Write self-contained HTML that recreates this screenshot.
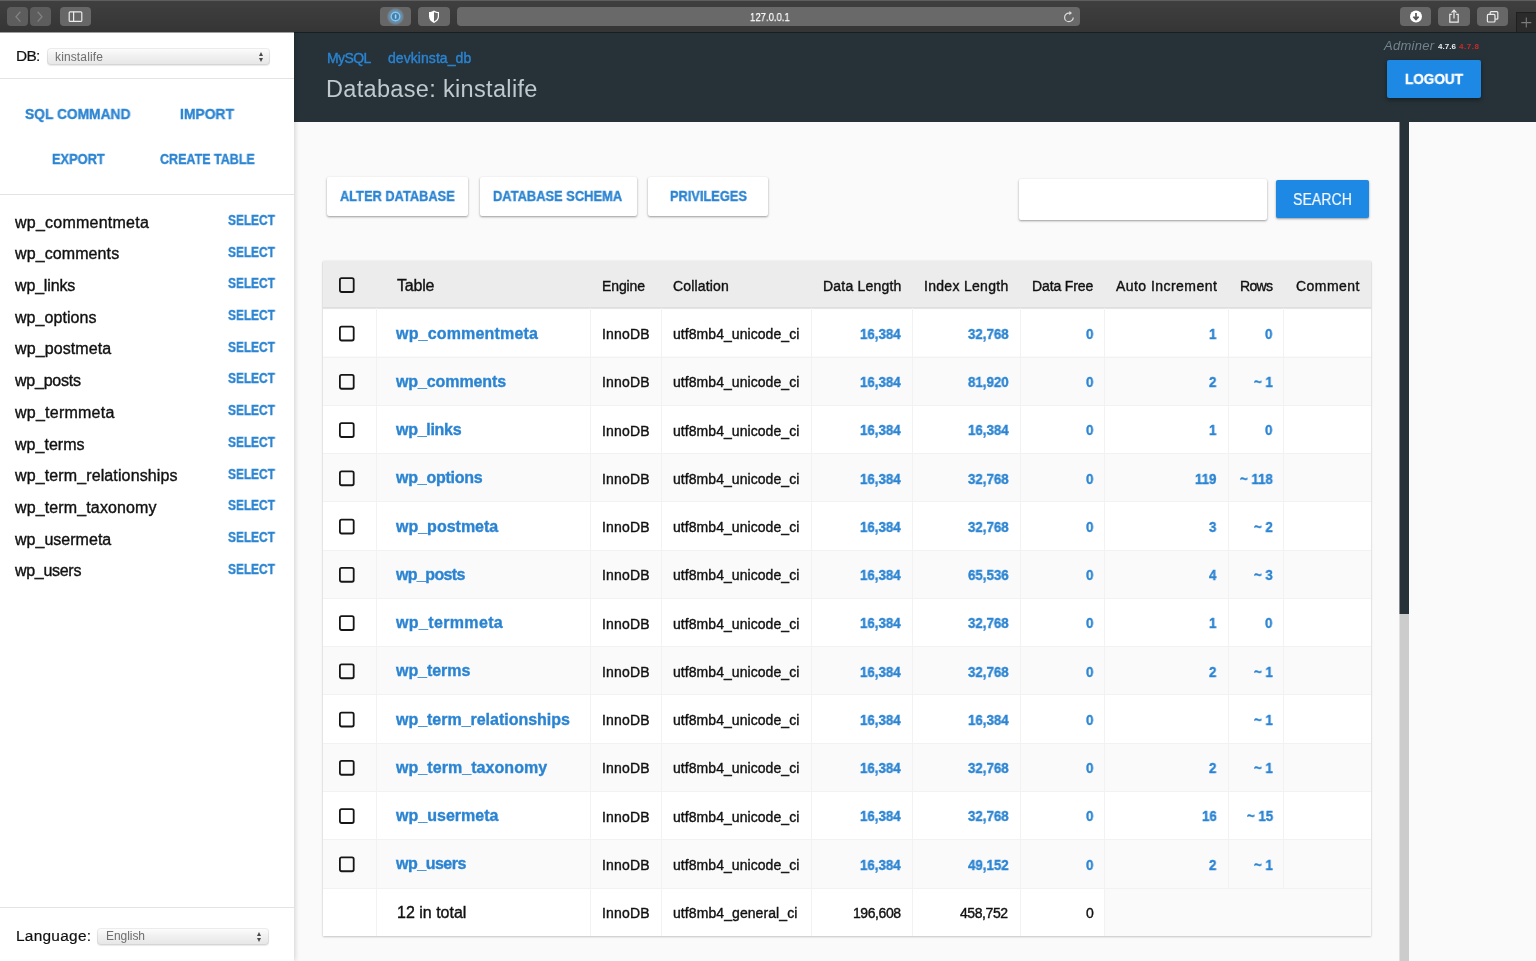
<!DOCTYPE html>
<html lang="en"><head><meta charset="utf-8"><title>Adminer - kinstalife</title>
<style>
*{box-sizing:border-box;margin:0;padding:0}
html,body{width:1536px;height:961px;overflow:hidden;background:#fafafa;font-family:"Liberation Sans",Arial,sans-serif;color:#111}
a{text-decoration:none;color:#2b84d2;cursor:pointer}
.t{position:absolute;white-space:nowrap;display:block;will-change:transform;transform-origin:0 50%}
#chrome{position:absolute;left:0;top:0;width:1536px;height:32px;background:linear-gradient(#626262 0,#5a5a5a 1px,#3f3f3f 1.5px,#353535 32px);z-index:10}
.tb{position:absolute;top:7px;height:19px;background:#676767;border-radius:4px}
.tb svg{display:block}
.url{position:absolute;top:7px;height:19px;background:#696969;border-radius:4px}
.ut{color:#fff;-webkit-text-stroke:.25px #fff}
.rl{position:absolute;left:1062px;top:9.5px}
.nt{position:absolute;left:1515.5px;top:11.5px;width:20px;height:20px;background:#2b2b2b;border-left:1px solid #1f1f1f;border-top:1px solid #1f1f1f}
#side{position:absolute;left:0;top:0;width:294px;height:961px;background:#fff;box-shadow:1px 0 5px rgba(0,0,0,.17);z-index:5}
.sel{position:absolute;height:17px;border-radius:4px;background:linear-gradient(#fefefe,#f1f1f1 45%,#e6e6e6);box-shadow:inset 0 0 0 1px rgba(0,0,0,.07),0 1px 1px rgba(0,0,0,.09)}
.opt{color:#6e6e6e}
.arr{position:absolute;right:6.3px;top:3.5px;width:5.4px;height:10px}
.arr:before,.arr:after{content:"";position:absolute;left:0;border-left:2.7px solid transparent;border-right:2.7px solid transparent}
.arr:before{top:0;border-bottom:4px solid #4a4a4a}
.arr:after{bottom:0;border-top:4px solid #4a4a4a}
.hr{position:absolute;left:0;width:294px;height:1px;background:#e3e3e3}
#head{position:absolute;left:294px;top:32px;width:1242px;height:90px;background:#263238}
#main{position:absolute;left:0;top:0;width:1536px;height:961px}
h2{color:#bfc9ce}
.adm{color:#74838b}
.v1{color:#e8ecee}.v2{color:#cc2a2a}
.logout{position:absolute;left:1387px;top:60px;width:94px;height:38px;background:#1e88e5;border-radius:2px;box-shadow:0 2px 4px rgba(0,0,0,.4)}
.lo,.sr{color:#fff}
.btn{position:absolute;top:176.5px;height:39px;background:#fff;border-radius:2px;box-shadow:0 1px 3px rgba(0,0,0,.16),0 1px 2px rgba(0,0,0,.26)}
.inp{position:absolute;left:1019px;top:178.8px;width:248.2px;height:40.8px;background:#fff;border-radius:2px;box-shadow:0 1px 3px rgba(0,0,0,.16),0 1px 2px rgba(0,0,0,.26)}
.search{position:absolute;left:1275.5px;top:179.8px;width:93.6px;height:38.4px;background:#1e88e5;border-radius:2px;box-shadow:0 1px 3px rgba(0,0,0,.16),0 1px 2px rgba(0,0,0,.26)}
#tbl{position:absolute;background:#fafafa;box-shadow:0 1px 2px rgba(0,0,0,.2),0 0 2px rgba(0,0,0,.08)}
.r{position:absolute;left:0;width:100%;border-top:1px solid #f2f2f2}
.thr{background:#ececec;border-top:0;border-bottom:1px solid #dedede;box-shadow:0 1px 1px rgba(0,0,0,.05)}
.odd{background:#fff}.even{background:#fafafa}
.vl{position:absolute;width:1px;background:#f2f2f2}
.cbs{position:absolute;left:15.6px;top:0}.cbs rect{fill:none;stroke:#161616;stroke-width:1.8}
.sb1{position:absolute;left:1400px;top:122px;width:9px;height:492px;background:#263238;box-shadow:-1px 0 0 rgba(38,50,56,.55)}
.sb2{position:absolute;left:1400px;top:614px;width:9px;height:347px;background:#ccc;box-shadow:-1px 0 0 rgba(204,204,204,.55)}
.nav,.se,.bt,.nm,.nu,.lo{-webkit-text-stroke:.35px currentColor}
.th,.tht,.td,.tdt,.tn,.bc{-webkit-text-stroke:.38px currentColor}
.lbl{-webkit-text-stroke:.2px currentColor}
.sr{-webkit-text-stroke:.12px currentColor}
#cl{position:absolute;left:0;top:32px;width:1536px;height:1px;background:rgba(0,0,0,.38);z-index:11}
.tb.dim{background:#5d5d5d}
.lbl{font-size:15.4px;font-weight:400;font-style:normal;line-height:20px}
.opt{font-size:12px;font-weight:400;font-style:normal;line-height:16px}
.nav{font-size:14px;font-weight:700;font-style:normal;line-height:18px}
.tn{font-size:16px;font-weight:400;font-style:normal;line-height:20px}
.se{font-size:13.8px;font-weight:700;font-style:normal;line-height:18px}
.bc{font-size:14px;font-weight:400;font-style:normal;line-height:18px}
.h2{font-size:23.5px;font-weight:400;font-style:normal;line-height:30px}
.adm{font-size:13px;font-weight:400;font-style:italic;line-height:16px}
.v1{font-size:8px;font-weight:700;font-style:normal;line-height:10px}
.v2{font-size:8px;font-weight:700;font-style:normal;line-height:10px}
.lo{font-size:14.3px;font-weight:700;font-style:normal;line-height:18px}
.bt{font-size:14px;font-weight:700;font-style:normal;line-height:18px}
.sr{font-size:15.6px;font-weight:400;font-style:normal;line-height:20px}
.th{font-size:14px;font-weight:400;font-style:normal;line-height:18px}
.tht{font-size:16px;font-weight:400;font-style:normal;line-height:20px}
.td{font-size:14px;font-weight:400;font-style:normal;line-height:18px}
.tdt{font-size:16px;font-weight:400;font-style:normal;line-height:20px}
.nm{font-size:16px;font-weight:700;font-style:normal;line-height:20px}
.nu{font-size:14px;font-weight:700;font-style:normal;line-height:18px}
.ut{font-size:11.5px;font-weight:400;font-style:normal;line-height:14px}
</style></head>
<body>
<div id="chrome">
<div class="tb dim" style="left:7px;width:21px"><svg width="21" height="19" viewBox="0 0 21 19"><path d="M13.4 4.8 L9 9.7 L13.4 14.6" fill="none" stroke="#828282" stroke-width="1.3"/></svg></div>
<div class="tb dim" style="left:29.5px;width:21.5px"><svg width="21" height="19" viewBox="0 0 21 19"><path d="M7.6 4.8 L12 9.7 L7.6 14.6" fill="none" stroke="#828282" stroke-width="1.3"/></svg></div>
<div class="tb" style="left:59.5px;width:31.5px"><svg width="32" height="19" viewBox="0 0 32 19"><rect x="9.2" y="4.8" width="12.6" height="9.6" rx="1" fill="none" stroke="#ededed" stroke-width="1.2"/><path d="M13.6 4.8v9.6" stroke="#ededed" stroke-width="1.2"/></svg></div>
<div class="tb" style="left:380px;width:31px"><svg width="31" height="19" viewBox="0 0 31 19"><defs><radialGradient id="hg"><stop offset="0.6" stop-color="#8cc4ea" stop-opacity=".55"/><stop offset="1" stop-color="#8cc4ea" stop-opacity="0"/></radialGradient></defs><circle cx="15.5" cy="9.5" r="9" fill="url(#hg)"/><circle cx="15.5" cy="9.5" r="6.6" fill="#5f8fb3"/><circle cx="15.5" cy="9.5" r="5" fill="#8fc4e6"/><circle cx="15.5" cy="9.5" r="3.6" fill="#3f7fae"/><rect x="14.8" y="7.2" width="1.6" height="4.6" rx=".8" fill="#a9d4ee"/></svg></div>
<div class="tb" style="left:418px;width:32px"><svg width="32" height="19" viewBox="0 0 32 19"><path d="M16 3.4 C14 4.6 12.6 5 11 5.1 V9.6 C11 12.6 13.2 14.8 16 16 C18.8 14.8 21 12.6 21 9.6 V5.1 C19.4 5 18 4.6 16 3.4Z" fill="#fff"/><path d="M16 4.9 C17.4 5.7 18.5 6 19.8 6.1 V9.6 C19.8 11.9 18.2 13.6 16 14.6Z" fill="#6b6b6b"/></svg></div>
<div class="url" style="left:457px;width:623px"></div><span class="t ut" style="left:749.5px;top:10.4px;transform:scaleX(0.830)">127.0.0.1</span><svg class="rl" width="14" height="14" viewBox="0 0 14 14"><path d="M11.2 7.4a4.3 4.3 0 1 1-4.3-4.3h1.2" fill="none" stroke="#dcdcdc" stroke-width="1.2"/><path d="M7.4 0.9 L10 3.1 L7.4 5.3Z" fill="#dcdcdc"/></svg>
<div class="tb" style="left:1399.5px;width:31.5px"><svg width="32" height="19" viewBox="0 0 32 19"><circle cx="16" cy="9.6" r="6" fill="#fff"/><path d="M16 6v6M13.4 9.6 L16 12.4 L18.6 9.6" fill="none" stroke="#555" stroke-width="1.7"/></svg></div>
<div class="tb" style="left:1438px;width:32px"><svg width="32" height="19" viewBox="0 0 32 19"><path d="M13.8 7.3H11.8V15.2H20.2V7.3H18.2" fill="none" stroke="#ededed" stroke-width="1.2"/><path d="M16 11.4V3.4M13.6 5.6 L16 3.2 L18.4 5.6" fill="none" stroke="#ededed" stroke-width="1.2"/></svg></div>
<div class="tb" style="left:1477px;width:31px"><svg width="31" height="19" viewBox="0 0 31 19"><rect x="10.4" y="7.4" width="7.6" height="7.6" rx="1" fill="none" stroke="#ededed" stroke-width="1.2"/><path d="M13.2 7.2V5.6a1 1 0 0 1 1-1h5.6a1 1 0 0 1 1 1v5.6a1 1 0 0 1-1 1H18.2" fill="none" stroke="#ededed" stroke-width="1.2"/></svg></div>
<div class="nt"><svg width="20" height="20" viewBox="0 0 20 20"><path d="M9.3 4.6v10M4.3 9.6h10" stroke="#7c7c7c" stroke-width="1.1"/></svg></div>
</div>
<div id="cl"></div>
<div id="side">
<span class="t lbl" style="left:16.2px;top:45.9px;letter-spacing:-0.64px">DB:</span>
<div class="sel" style="left:47px;top:48.3px;width:223.4px"><i class="arr"></i></div>
<span class="t opt" style="left:55.1px;top:48.5px;letter-spacing:0.13px">kinstalife</span>
<div class="hr" style="top:78px"></div>
<a class="t nav" style="left:25.0px;top:105.4px;transform:scaleX(0.985)">SQL COMMAND</a>
<a class="t nav" style="left:180.1px;top:105.4px;transform:scaleX(0.990)">IMPORT</a>
<a class="t nav" style="left:51.8px;top:150.4px;transform:scaleX(0.915)">EXPORT</a>
<a class="t nav" style="left:160.2px;top:150.4px;transform:scaleX(0.893)">CREATE TABLE</a>
<div class="hr" style="top:194px"></div>
<span class="t tn" style="left:15.4px;top:212.5px;letter-spacing:0.24px">wp_commentmeta</span><a class="t se" style="left:228.0px;top:211.8px;transform:scaleX(0.861)">SELECT</a>
<span class="t tn" style="left:15.4px;top:244.2px;letter-spacing:0.10px">wp_comments</span><a class="t se" style="left:228.0px;top:243.5px;transform:scaleX(0.861)">SELECT</a>
<span class="t tn" style="left:15.4px;top:275.9px;letter-spacing:-0.16px">wp_links</span><a class="t se" style="left:228.0px;top:275.3px;transform:scaleX(0.861)">SELECT</a>
<span class="t tn" style="left:15.4px;top:307.6px;letter-spacing:0.06px">wp_options</span><a class="t se" style="left:228.0px;top:307.0px;transform:scaleX(0.861)">SELECT</a>
<span class="t tn" style="left:15.4px;top:339.3px;letter-spacing:0.11px">wp_postmeta</span><a class="t se" style="left:228.0px;top:338.7px;transform:scaleX(0.861)">SELECT</a>
<span class="t tn" style="left:15.4px;top:371.1px;letter-spacing:-0.22px">wp_posts</span><a class="t se" style="left:228.0px;top:370.4px;transform:scaleX(0.861)">SELECT</a>
<span class="t tn" style="left:15.4px;top:402.8px;letter-spacing:0.24px">wp_termmeta</span><a class="t se" style="left:228.0px;top:402.1px;transform:scaleX(0.861)">SELECT</a>
<span class="t tn" style="left:15.4px;top:434.5px;letter-spacing:0.02px">wp_terms</span><a class="t se" style="left:228.0px;top:433.9px;transform:scaleX(0.861)">SELECT</a>
<span class="t tn" style="left:15.4px;top:466.2px;letter-spacing:0.12px">wp_term_relationships</span><a class="t se" style="left:228.0px;top:465.6px;transform:scaleX(0.861)">SELECT</a>
<span class="t tn" style="left:15.4px;top:497.9px;letter-spacing:0.13px">wp_term_taxonomy</span><a class="t se" style="left:228.0px;top:497.3px;transform:scaleX(0.861)">SELECT</a>
<span class="t tn" style="left:15.4px;top:529.7px;letter-spacing:0.02px">wp_usermeta</span><a class="t se" style="left:228.0px;top:529.0px;transform:scaleX(0.861)">SELECT</a>
<span class="t tn" style="left:15.4px;top:561.4px;letter-spacing:-0.30px">wp_users</span><a class="t se" style="left:228.0px;top:560.7px;transform:scaleX(0.861)">SELECT</a>
<div class="hr" style="top:907px"></div>
<span class="t lbl" style="left:16.0px;top:925.5px;letter-spacing:0.28px">Language:</span>
<div class="sel" style="left:97px;top:928.3px;width:171.7px"><i class="arr"></i></div>
<span class="t opt" style="left:105.5px;top:928.2px;letter-spacing:-0.06px">English</span>
</div>
<div id="head"></div>
<div id="main">
<a class="t bc" style="left:326.6px;top:49.1px;letter-spacing:-0.59px">MySQL</a><a class="t bc" style="left:387.5px;top:49.1px;letter-spacing:0.06px">devkinsta_db</a>
<h2 class="t h2" style="left:325.6px;top:74.2px;letter-spacing:0.33px">Database: kinstalife</h2>
<span class="t adm" style="left:1383.8px;top:37.9px;letter-spacing:0.28px">Adminer</span><span class="t v1" style="left:1438.0px;top:42.1px;letter-spacing:0.05px">4.7.6</span><span class="t v2" style="left:1459.3px;top:42.1px;letter-spacing:0.53px">4.7.8</span>
<div class="logout"></div><span class="t lo" style="left:1404.6px;top:70.4px;transform:scaleX(0.948)">LOGOUT</span>
<div class="btn" style="left:327.2px;width:140.6px"></div><a class="t bt" style="left:339.7px;top:187.0px;transform:scaleX(0.916)">ALTER DATABASE</a>
<div class="btn" style="left:479.7px;width:156.9px"></div><a class="t bt" style="left:493.4px;top:187.0px;transform:scaleX(0.920)">DATABASE SCHEMA</a>
<div class="btn" style="left:648.1px;width:120.3px"></div><a class="t bt" style="left:670.0px;top:187.0px;transform:scaleX(0.915)">PRIVILEGES</a>
<div class="inp"></div><div class="search"></div><span class="t sr" style="left:1292.6px;top:189.8px;transform:scaleX(0.906)">SEARCH</span>
<div id="tbl" style="left:323px;top:261px;width:1047.8px;height:674.8px">
<div class="r odd" style="top:47.2px;height:48.28px"></div><div class="r even" style="top:95.5px;height:48.28px"></div><div class="r odd" style="top:143.8px;height:48.28px"></div><div class="r even" style="top:192.0px;height:48.28px"></div><div class="r odd" style="top:240.3px;height:48.28px"></div><div class="r even" style="top:288.6px;height:48.28px"></div><div class="r odd" style="top:336.9px;height:48.28px"></div><div class="r even" style="top:385.2px;height:48.28px"></div><div class="r odd" style="top:433.4px;height:48.28px"></div><div class="r even" style="top:481.7px;height:48.28px"></div><div class="r odd" style="top:530.0px;height:48.28px"></div><div class="r even" style="top:578.3px;height:48.28px"></div><div class="r" style="top:626.6px;height:48.28px"></div><div class="r odd" style="top:626.6px;height:48.28px;width:781.6px"></div>
<div class="r thr" style="top:0;height:47.2px"></div>
<div class="vl" style="left:52.8px;top:47.2px;height:627.6px"></div><div class="vl" style="left:266.8px;top:47.2px;height:627.6px"></div><div class="vl" style="left:337.9px;top:47.2px;height:627.6px"></div><div class="vl" style="left:487.5px;top:47.2px;height:627.6px"></div><div class="vl" style="left:589.0px;top:47.2px;height:627.6px"></div><div class="vl" style="left:697.2px;top:47.2px;height:627.6px"></div><div class="vl" style="left:781.1px;top:47.2px;height:627.6px"></div><div class="vl" style="left:904.8px;top:47.2px;height:579.4px"></div><div class="vl" style="left:960.3px;top:47.2px;height:579.4px"></div>
<svg class="cbs" width="20" height="675" viewBox="0 0 20 675"><rect x="0.9" y="17.20" width="13.8" height="13.8" rx="1.7"/><rect x="0.9" y="65.70" width="13.8" height="13.8" rx="1.7"/><rect x="0.9" y="113.95" width="13.8" height="13.8" rx="1.7"/><rect x="0.9" y="162.20" width="13.8" height="13.8" rx="1.7"/><rect x="0.9" y="210.45" width="13.8" height="13.8" rx="1.7"/><rect x="0.9" y="258.70" width="13.8" height="13.8" rx="1.7"/><rect x="0.9" y="306.95" width="13.8" height="13.8" rx="1.7"/><rect x="0.9" y="355.20" width="13.8" height="13.8" rx="1.7"/><rect x="0.9" y="403.45" width="13.8" height="13.8" rx="1.7"/><rect x="0.9" y="451.70" width="13.8" height="13.8" rx="1.7"/><rect x="0.9" y="499.95" width="13.8" height="13.8" rx="1.7"/><rect x="0.9" y="548.20" width="13.8" height="13.8" rx="1.7"/><rect x="0.9" y="596.45" width="13.8" height="13.8" rx="1.7"/></svg>
</div>
<span class="t tht" style="left:396.5px;top:275.7px;letter-spacing:-0.21px">Table</span><span class="t th" style="left:601.9px;top:276.9px;letter-spacing:-0.12px">Engine</span><span class="t th" style="left:673.2px;top:276.9px;letter-spacing:0.15px">Collation</span><span class="t th" style="left:822.7px;top:276.9px;letter-spacing:0.20px">Data Length</span><span class="t th" style="left:924.3px;top:276.9px;letter-spacing:0.30px">Index Length</span><span class="t th" style="left:1032.0px;top:276.9px;letter-spacing:-0.13px">Data Free</span><span class="t th" style="left:1115.8px;top:276.9px;letter-spacing:0.45px">Auto Increment</span><span class="t th" style="left:1239.8px;top:276.9px;letter-spacing:-0.67px">Rows</span><span class="t th" style="left:1295.7px;top:276.9px;letter-spacing:0.45px">Comment</span>
<a class="t nm" style="left:396.0px;top:323.5px;letter-spacing:0.18px">wp_commentmeta</a><span class="t td" style="left:601.9px;top:325.1px;letter-spacing:0.16px">InnoDB</span><span class="t td" style="left:673.2px;top:325.1px;letter-spacing:0.06px">utf8mb4_unicode_ci</span><a class="t nu" style="left:860.3px;top:324.9px;transform:scaleX(0.950)">16,384</a><a class="t nu" style="left:967.9px;top:324.9px;transform:scaleX(0.950)">32,768</a><a class="t nu" style="left:1085.8px;top:324.9px;transform:scaleX(0.950)">0</a><a class="t nu" style="left:1209.0px;top:324.9px;transform:scaleX(0.950)">1</a><a class="t nu" style="left:1265.4px;top:324.9px;transform:scaleX(0.950)">0</a>
<a class="t nm" style="left:396.0px;top:371.7px;letter-spacing:-0.10px">wp_comments</a><span class="t td" style="left:601.9px;top:373.4px;letter-spacing:0.16px">InnoDB</span><span class="t td" style="left:673.2px;top:373.4px;letter-spacing:0.06px">utf8mb4_unicode_ci</span><a class="t nu" style="left:860.3px;top:373.2px;transform:scaleX(0.950)">16,384</a><a class="t nu" style="left:967.9px;top:373.2px;transform:scaleX(0.950)">81,920</a><a class="t nu" style="left:1085.8px;top:373.2px;transform:scaleX(0.950)">0</a><a class="t nu" style="left:1209.0px;top:373.2px;transform:scaleX(0.950)">2</a><a class="t nu" style="left:1253.9px;top:373.2px;transform:scaleX(0.950)">~ 1</a>
<a class="t nm" style="left:396.0px;top:420.0px;letter-spacing:-0.29px">wp_links</a><span class="t td" style="left:601.9px;top:421.6px;letter-spacing:0.16px">InnoDB</span><span class="t td" style="left:673.2px;top:421.6px;letter-spacing:0.06px">utf8mb4_unicode_ci</span><a class="t nu" style="left:860.3px;top:421.4px;transform:scaleX(0.950)">16,384</a><a class="t nu" style="left:967.9px;top:421.4px;transform:scaleX(0.950)">16,384</a><a class="t nu" style="left:1085.8px;top:421.4px;transform:scaleX(0.950)">0</a><a class="t nu" style="left:1209.0px;top:421.4px;transform:scaleX(0.950)">1</a><a class="t nu" style="left:1265.4px;top:421.4px;transform:scaleX(0.950)">0</a>
<a class="t nm" style="left:396.0px;top:468.2px;letter-spacing:-0.24px">wp_options</a><span class="t td" style="left:601.9px;top:469.9px;letter-spacing:0.16px">InnoDB</span><span class="t td" style="left:673.2px;top:469.9px;letter-spacing:0.06px">utf8mb4_unicode_ci</span><a class="t nu" style="left:860.3px;top:469.7px;transform:scaleX(0.950)">16,384</a><a class="t nu" style="left:967.9px;top:469.7px;transform:scaleX(0.950)">32,768</a><a class="t nu" style="left:1085.8px;top:469.7px;transform:scaleX(0.950)">0</a><a class="t nu" style="left:1194.9px;top:469.7px;transform:scaleX(0.950)">119</a><a class="t nu" style="left:1239.9px;top:469.7px;transform:scaleX(0.950)">~ 118</a>
<a class="t nm" style="left:396.0px;top:516.5px">wp_postmeta</a><span class="t td" style="left:601.9px;top:518.1px;letter-spacing:0.16px">InnoDB</span><span class="t td" style="left:673.2px;top:518.1px;letter-spacing:0.06px">utf8mb4_unicode_ci</span><a class="t nu" style="left:860.3px;top:517.9px;transform:scaleX(0.950)">16,384</a><a class="t nu" style="left:967.9px;top:517.9px;transform:scaleX(0.950)">32,768</a><a class="t nu" style="left:1085.8px;top:517.9px;transform:scaleX(0.950)">0</a><a class="t nu" style="left:1209.0px;top:517.9px;transform:scaleX(0.950)">3</a><a class="t nu" style="left:1253.9px;top:517.9px;transform:scaleX(0.950)">~ 2</a>
<a class="t nm" style="left:396.0px;top:564.7px;letter-spacing:-0.62px">wp_posts</a><span class="t td" style="left:601.9px;top:566.4px;letter-spacing:0.16px">InnoDB</span><span class="t td" style="left:673.2px;top:566.4px;letter-spacing:0.06px">utf8mb4_unicode_ci</span><a class="t nu" style="left:860.3px;top:566.2px;transform:scaleX(0.950)">16,384</a><a class="t nu" style="left:967.9px;top:566.2px;transform:scaleX(0.950)">65,536</a><a class="t nu" style="left:1085.8px;top:566.2px;transform:scaleX(0.950)">0</a><a class="t nu" style="left:1209.0px;top:566.2px;transform:scaleX(0.950)">4</a><a class="t nu" style="left:1253.9px;top:566.2px;transform:scaleX(0.950)">~ 3</a>
<a class="t nm" style="left:396.0px;top:613.0px;letter-spacing:0.36px">wp_termmeta</a><span class="t td" style="left:601.9px;top:614.6px;letter-spacing:0.16px">InnoDB</span><span class="t td" style="left:673.2px;top:614.6px;letter-spacing:0.06px">utf8mb4_unicode_ci</span><a class="t nu" style="left:860.3px;top:614.4px;transform:scaleX(0.950)">16,384</a><a class="t nu" style="left:967.9px;top:614.4px;transform:scaleX(0.950)">32,768</a><a class="t nu" style="left:1085.8px;top:614.4px;transform:scaleX(0.950)">0</a><a class="t nu" style="left:1209.0px;top:614.4px;transform:scaleX(0.950)">1</a><a class="t nu" style="left:1265.4px;top:614.4px;transform:scaleX(0.950)">0</a>
<a class="t nm" style="left:396.0px;top:661.2px;letter-spacing:-0.05px">wp_terms</a><span class="t td" style="left:601.9px;top:662.9px;letter-spacing:0.16px">InnoDB</span><span class="t td" style="left:673.2px;top:662.9px;letter-spacing:0.06px">utf8mb4_unicode_ci</span><a class="t nu" style="left:860.3px;top:662.7px;transform:scaleX(0.950)">16,384</a><a class="t nu" style="left:967.9px;top:662.7px;transform:scaleX(0.950)">32,768</a><a class="t nu" style="left:1085.8px;top:662.7px;transform:scaleX(0.950)">0</a><a class="t nu" style="left:1209.0px;top:662.7px;transform:scaleX(0.950)">2</a><a class="t nu" style="left:1253.9px;top:662.7px;transform:scaleX(0.950)">~ 1</a>
<a class="t nm" style="left:396.0px;top:709.5px;letter-spacing:-0.02px">wp_term_relationships</a><span class="t td" style="left:601.9px;top:711.1px;letter-spacing:0.16px">InnoDB</span><span class="t td" style="left:673.2px;top:711.1px;letter-spacing:0.06px">utf8mb4_unicode_ci</span><a class="t nu" style="left:860.3px;top:710.9px;transform:scaleX(0.950)">16,384</a><a class="t nu" style="left:967.9px;top:710.9px;transform:scaleX(0.950)">16,384</a><a class="t nu" style="left:1085.8px;top:710.9px;transform:scaleX(0.950)">0</a><a class="t nu" style="left:1253.9px;top:710.9px;transform:scaleX(0.950)">~ 1</a>
<a class="t nm" style="left:396.0px;top:757.7px;letter-spacing:0.06px">wp_term_taxonomy</a><span class="t td" style="left:601.9px;top:759.4px;letter-spacing:0.16px">InnoDB</span><span class="t td" style="left:673.2px;top:759.4px;letter-spacing:0.06px">utf8mb4_unicode_ci</span><a class="t nu" style="left:860.3px;top:759.2px;transform:scaleX(0.950)">16,384</a><a class="t nu" style="left:967.9px;top:759.2px;transform:scaleX(0.950)">32,768</a><a class="t nu" style="left:1085.8px;top:759.2px;transform:scaleX(0.950)">0</a><a class="t nu" style="left:1209.0px;top:759.2px;transform:scaleX(0.950)">2</a><a class="t nu" style="left:1253.9px;top:759.2px;transform:scaleX(0.950)">~ 1</a>
<a class="t nm" style="left:396.0px;top:806.0px;letter-spacing:0.02px">wp_usermeta</a><span class="t td" style="left:601.9px;top:807.6px;letter-spacing:0.16px">InnoDB</span><span class="t td" style="left:673.2px;top:807.6px;letter-spacing:0.06px">utf8mb4_unicode_ci</span><a class="t nu" style="left:860.3px;top:807.4px;transform:scaleX(0.950)">16,384</a><a class="t nu" style="left:967.9px;top:807.4px;transform:scaleX(0.950)">32,768</a><a class="t nu" style="left:1085.8px;top:807.4px;transform:scaleX(0.950)">0</a><a class="t nu" style="left:1201.6px;top:807.4px;transform:scaleX(0.950)">16</a><a class="t nu" style="left:1246.5px;top:807.4px;transform:scaleX(0.950)">~ 15</a>
<a class="t nm" style="left:396.0px;top:854.2px;letter-spacing:-0.49px">wp_users</a><span class="t td" style="left:601.9px;top:855.9px;letter-spacing:0.16px">InnoDB</span><span class="t td" style="left:673.2px;top:855.9px;letter-spacing:0.06px">utf8mb4_unicode_ci</span><a class="t nu" style="left:860.3px;top:855.7px;transform:scaleX(0.950)">16,384</a><a class="t nu" style="left:967.9px;top:855.7px;transform:scaleX(0.950)">49,152</a><a class="t nu" style="left:1085.8px;top:855.7px;transform:scaleX(0.950)">0</a><a class="t nu" style="left:1209.0px;top:855.7px;transform:scaleX(0.950)">2</a><a class="t nu" style="left:1253.9px;top:855.7px;transform:scaleX(0.950)">~ 1</a>
<span class="t tdt" style="left:397.0px;top:902.5px">12 in total</span><span class="t td" style="left:601.9px;top:904.1px;letter-spacing:0.16px">InnoDB</span><span class="t td" style="left:673.2px;top:904.1px;letter-spacing:0.08px">utf8mb4_general_ci</span><span class="t td" style="left:852.7px;top:904.1px;letter-spacing:-0.42px">196,608</span><span class="t td" style="left:960.2px;top:904.1px;letter-spacing:-0.43px">458,752</span><span class="t td" style="left:1086.3px;top:904.1px">0</span>
<div class="sb1"></div><div class="sb2"></div>
</div>
</body></html>
